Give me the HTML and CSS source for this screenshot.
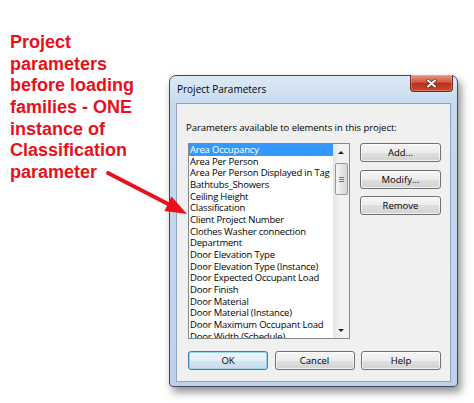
FILE: index.html
```html
<!DOCTYPE html>
<html>
<head>
    <title>Project Parameters</title>
    <link rel="stylesheet" href="styles.css">
</head>
<body>
    <div class="page">
        <p class="note">Project<br>parameters<br>before loading<br>families - ONE<br>instance of<br>Classification<br>parameter</p>

        <div class="dialog">
            <div class="titlebar">
                <span class="caption">Project Parameters</span>
                <span class="close">
                    <svg width="11" height="9" viewBox="0 0 11 9">
                        <path d="M2 1.5 L9 7.5 M9 1.5 L2 7.5" stroke="#5a2a22" stroke-width="3.4" stroke-linecap="round"/>
                        <path d="M2 1.5 L9 7.5 M9 1.5 L2 7.5" stroke="#fff" stroke-width="2" stroke-linecap="round"/>
                    </svg>
                </span>
            </div>

            <div class="client">
                <div class="label">Parameters available to elements in this project:</div>

                <div class="main">
                    <div class="listbox">
                        <ul class="items">
                            <li class="selected">Area Occupancy</li>
                            <li>Area Per Person</li>
                            <li>Area Per Person Displayed in Tag</li>
                            <li>Bathtubs_Showers</li>
                            <li>Ceiling Height</li>
                            <li>Classification</li>
                            <li>Client Project Number</li>
                            <li>Clothes Washer connection</li>
                            <li>Department</li>
                            <li>Door Elevation Type</li>
                            <li>Door Elevation Type (Instance)</li>
                            <li>Door Expected Occupant Load</li>
                            <li>Door Finish</li>
                            <li>Door Material</li>
                            <li>Door Material (Instance)</li>
                            <li>Door Maximum Occupant Load</li>
                            <li>Door Width (Schedule)</li>
                        </ul>
                        <div class="scrollbar">
                            <span class="scroll-btn"><span class="tri-up"></span></span>
                            <span class="track">
                                <span class="thumb"><span class="grip"></span></span>
                            </span>
                            <span class="scroll-btn"><span class="tri-down"></span></span>
                        </div>
                    </div>

                    <div class="side-buttons">
                        <button class="btn">Add...</button>
                        <button class="btn">Modify...</button>
                        <button class="btn">Remove</button>
                    </div>
                </div>

                <div class="footer">
                    <button class="btn default">OK</button>
                    <button class="btn">Cancel</button>
                    <button class="btn">Help</button>
                </div>
            </div>
        </div>
    </div>

    <!-- red callout arrow pointing at Classification -->
    <svg class="pointer" width="474" height="403" viewBox="0 0 474 403">
        <line x1="108" y1="173" x2="170" y2="205" stroke="#e8101a" stroke-width="3.8" stroke-linecap="round"/>
        <polygon points="187,214 164.5,211 171.5,196.5" fill="#e8101a"/>
    </svg>
</body>
</html>
```

FILE: styles.css
```css
/* Set body font and background color */
body {
    margin: 0;
    width: 474px;
    height: 403px;
    overflow: hidden;
    background-color: #fff;
    font-family: "Open Sans", "Noto Sans", sans-serif;
    position: relative;
}

.page {
    display: flex;
    align-items: flex-start;
}

/* Set callout text styles */
.note {
    margin: 32px 0 0 10px;
    width: 159px;
    font-family: "Liberation Sans", Arial, sans-serif;
    font-weight: bold;
    font-size: 18px;
    line-height: 21.67px;
    color: #e8101a;
}

.pointer {
    position: absolute;
    top: 0;
    left: 0;
    pointer-events: none;
}

/* Set dialog window styles */
.dialog {
    margin-top: 75px;
    width: 289px;
    height: 312px;
    box-sizing: border-box;
    border: 1px solid #3d4a5a;
    border-radius: 7px 7px 4px 4px;
    background: linear-gradient(#dde9f6, #c6d9ee 30px, #bdd2ea);
    box-shadow: 3px 5px 8px rgba(0, 0, 0, 0.45);
    padding: 0 6px 4px 6px;
    display: flex;
    flex-direction: column;
}

.titlebar {
    height: 27px;
    display: flex;
    justify-content: space-between;
    align-items: flex-start;
}

    .titlebar .caption {
        padding: 6px 0 0 1px;
        font-size: 10px;
        line-height: 14px;
        color: #000;
    }

    .titlebar .close {
        width: 43px;
        height: 17px;
        margin: -1px -2px 0 0;
        box-sizing: border-box;
        border: 1px solid #6b2a20;
        border-top: none;
        border-radius: 0 0 4px 4px;
        background: linear-gradient(#e39584, #cf5a43 45%, #b8301b 52%, #c6492f);
        box-shadow: inset 0 0 0 1px rgba(255, 200, 190, 0.35);
        display: flex;
        align-items: center;
        justify-content: center;
    }

/* Set client area styles */
.client {
    flex: 1;
    background-color: #f0f0f0;
    border: 1px solid #8fa4bf;
    padding: 17px 9px 0 11px;
}

.label {
    margin: 0 0 8px -2px;
    font-size: 9.5px;
    line-height: 14px;
    letter-spacing: -0.05px;
}

.main {
    display: flex;
    gap: 10px;
}

/* Set list box styles */
.listbox {
    width: 162px;
    height: 196px;
    box-sizing: border-box;
    border: 1px solid #828790;
    background-color: #fff;
    display: flex;
}

    .listbox .items {
        flex: 1;
        margin: 0;
        padding: 0;
        list-style: none;
        overflow: hidden;
    }

        .listbox .items li {
            padding-left: 1px;
            font-size: 9.5px;
            line-height: 11.65px;
            letter-spacing: -0.2px;
            white-space: nowrap;
            overflow: hidden;
        }

        .listbox .items li.selected {
            background-color: #3399ff;
            color: #fff;
        }

.scrollbar {
    width: 16px;
    display: flex;
    flex-direction: column;
    background: linear-gradient(90deg, #e3e3e3, #f2f2f2 40%, #f2f2f2);
}

    .scrollbar .scroll-btn {
        height: 16px;
        display: flex;
        align-items: center;
        justify-content: center;
    }

    .scrollbar .track {
        flex: 1;
        padding: 3px 1px 0 2px;
    }

    .scrollbar .thumb {
        display: flex;
        align-items: center;
        justify-content: center;
        height: 32px;
        box-sizing: border-box;
        border: 1px solid #979797;
        border-radius: 2px;
        background: linear-gradient(90deg, #f6f6f6, #e6e6e6 50%, #d6d6d6);
    }

    .scrollbar .grip {
        width: 5px;
        height: 5px;
        background: repeating-linear-gradient(#777 0 1px, transparent 1px 2px);
    }

.tri-up {
    border-left: 3px solid transparent;
    border-right: 3px solid transparent;
    border-bottom: 3px solid #222;
}

.tri-down {
    border-left: 3px solid transparent;
    border-right: 3px solid transparent;
    border-top: 3px solid #222;
}

/* Set button styles */
.side-buttons {
    display: flex;
    flex-direction: column;
    gap: 7.5px;
}

.btn {
    width: 81px;
    height: 19px;
    padding: 0;
    box-sizing: border-box;
    border: 1px solid #707070;
    border-radius: 3px;
    background: linear-gradient(#f6f6f6, #ececec 50%, #dfdfdf 50%, #d3d3d3);
    box-shadow: inset 0 0 0 1px rgba(255, 255, 255, 0.7);
    font-family: "Open Sans", "Noto Sans", sans-serif;
    font-size: 9.5px;
    color: #000;
}

    .btn.default {
        border-color: #3c7fb1;
        box-shadow: inset 0 0 0 1px #9fd3ec;
        background: linear-gradient(#eef6fb, #e3eff7 50%, #d2e5f1 50%, #c8dded);
    }

.footer {
    margin-top: 12px;
    display: flex;
    gap: 6.5px;
}

    .footer .btn {
        width: 80px;
    }
```
